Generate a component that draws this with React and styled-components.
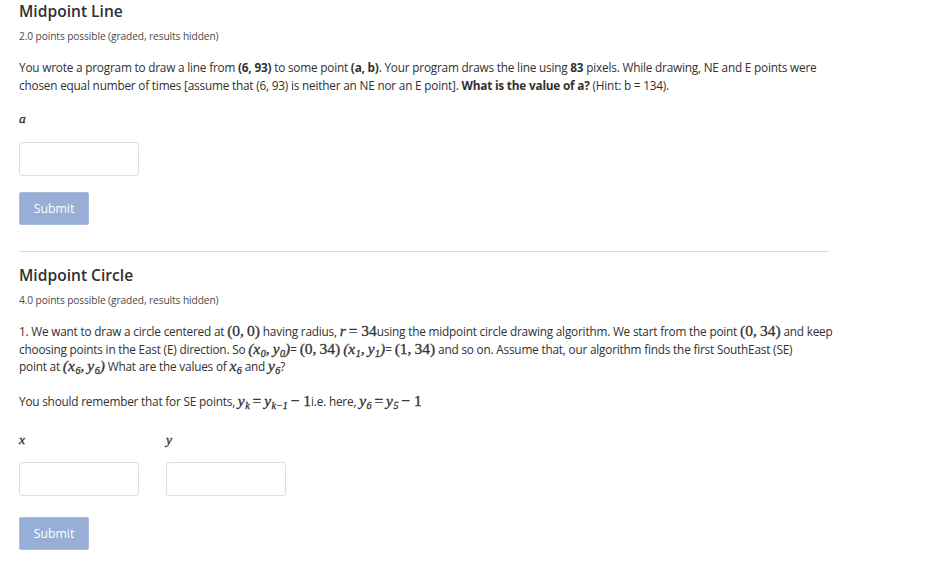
import React from "react";
import styled, { createGlobalStyle } from "styled-components";

const Global = createGlobalStyle`
  html, body { margin: 0; padding: 0; background: #fff; }
  body { font-family: "Open Sans", "Noto Sans", sans-serif; color: #313131; }
`;

const Page = styled.div`
  padding: 0 0 0 19px;
  width: 810px;
`;

const Problem = styled.section`
  padding-top: ${(p) => p.$top || 0}px;
  padding-bottom: 26px;
  border-bottom: ${(p) => (p.$divider ? "1px solid #dcdcdc" : "none")};
`;

const Title = styled.h2`
  margin: 0;
  font-size: 15.6px;
  font-weight: 600;
  line-height: 22px;
  color: #313131;
`;

const Meta = styled.div`
  margin-top: 7px;
  font-size: 10.2px;
  line-height: 14px;
  letter-spacing: -0.1px;
  color: #4a4a4a;
`;

const Para = styled.p`
  margin: ${(p) => p.$mt || 0}px ${(p) => p.$mr || 0}px 0 0;
  font-size: 11.8px;
  line-height: 17.5px;
  letter-spacing: -0.2px;
  color: #313131;
`;

const M = styled.span`
  font-family: "Liberation Serif", "DejaVu Serif", serif;
  font-style: ${(p) => (p.$up ? "normal" : "italic")};
  font-weight: 400;
  font-size: 15.5px;
  line-height: 0;
  letter-spacing: 0;
  -webkit-text-stroke: 0.3px #313131;
`;

const Sub = styled.sub`
  font-size: 10px;
  vertical-align: -3px;
  line-height: 0;
  margin-left: 0.5px;
`;

const Fields = styled.div`
  display: flex;
  gap: 27px;
  margin-top: ${(p) => p.$mt || 0}px;
`;

const Field = styled.div`
  display: flex;
  flex-direction: column;
`;

const Label = styled.div`
  font-family: "Liberation Serif", "DejaVu Serif", serif;
  font-style: italic;
  font-size: 13.5px;
  line-height: 16px;
  height: 16px;
  color: #313131;
  -webkit-text-stroke: 0.3px #313131;
`;

const Input = styled.input`
  margin-top: ${(p) => p.$mt || 15}px;
  width: 120px;
  height: 34px;
  box-sizing: border-box;
  border: 1px solid #dedede;
  border-radius: 3px;
  background: #fff;
  outline: none;
`;

const Button = styled.button`
  margin-top: ${(p) => p.$mt || 16}px;
  width: 70px;
  height: 33px;
  box-sizing: border-box;
  background: #97aed6;
  border: 1px solid #a9bde0;
  border-radius: 2px;
  color: #fff;
  font-family: "Open Sans", "Noto Sans", sans-serif;
  font-size: 12.3px;
  padding: 0;
  display: block;
`;

const T = "\u2009";

export default function App() {
  return (
    <>
      <Global />
      <Page>
        <Problem $divider>
          <Title>Midpoint Line</Title>
          <Meta>2.0 points possible (graded, results hidden)</Meta>
          <Para $mt={16}>
            You wrote a program to draw a line from <b>(6, 93)</b> to some point <b>(a, b)</b>. Your program draws the line using <b>83</b> pixels. While drawing, NE and E points were chosen equal number of times [assume that (6, 93) is neither an NE nor an E point]. <b>What is the value of a?</b> (Hint: b = 134).
          </Para>
          <Fields $mt={17}>
            <Field>
              <Label>a</Label>
              <Input aria-label="a" $mt={15} />
            </Field>
          </Fields>
          <Button $mt={16}>Submit</Button>
        </Problem>
        <Problem $top={12}>
          <Title>Midpoint Circle</Title>
          <Meta>4.0 points possible (graded, results hidden)</Meta>
          <Para $mt={16} $mr={-6}>
            1. We want to draw a circle centered at <M $up>(0,{T}0)</M> having radius, <M>r</M> <M $up>= 34</M>using the midpoint circle drawing algorithm. We start from the point <M $up>(0,{T}34)</M> and keep choosing points in the East (E) direction. So <M>(x<Sub>0</Sub>,{T}y<Sub>0</Sub>)</M>= <M $up>(0,{T}34)</M> <M>(x<Sub>1</Sub>,{T}y<Sub>1</Sub>)</M>= <M $up>(1,{T}34)</M> and so on. Assume that, our algorithm finds the first SouthEast (SE)<br />point at <M>(x<Sub>6</Sub>,{T}y<Sub>6</Sub>)</M> What are the values of <M>x<Sub>6</Sub></M> and <M>y<Sub>6</Sub></M>?
          </Para>
          <Para $mt={17}>
            You should remember that for SE points, <M>y<Sub>k</Sub></M> <M $up>=</M> <M>y<Sub>k−1</Sub></M> <M $up>− 1</M>i.e. here, <M>y<Sub>6</Sub></M> <M $up>=</M> <M>y<Sub>5</Sub></M> <M $up>− 1</M>
          </Para>
          <Fields $mt={22}>
            <Field>
              <Label>x</Label>
              <Input aria-label="x" $mt={14} />
            </Field>
            <Field>
              <Label>y</Label>
              <Input aria-label="y" $mt={14} />
            </Field>
          </Fields>
          <Button $mt={21}>Submit</Button>
        </Problem>
      </Page>
    </>
  );
}
